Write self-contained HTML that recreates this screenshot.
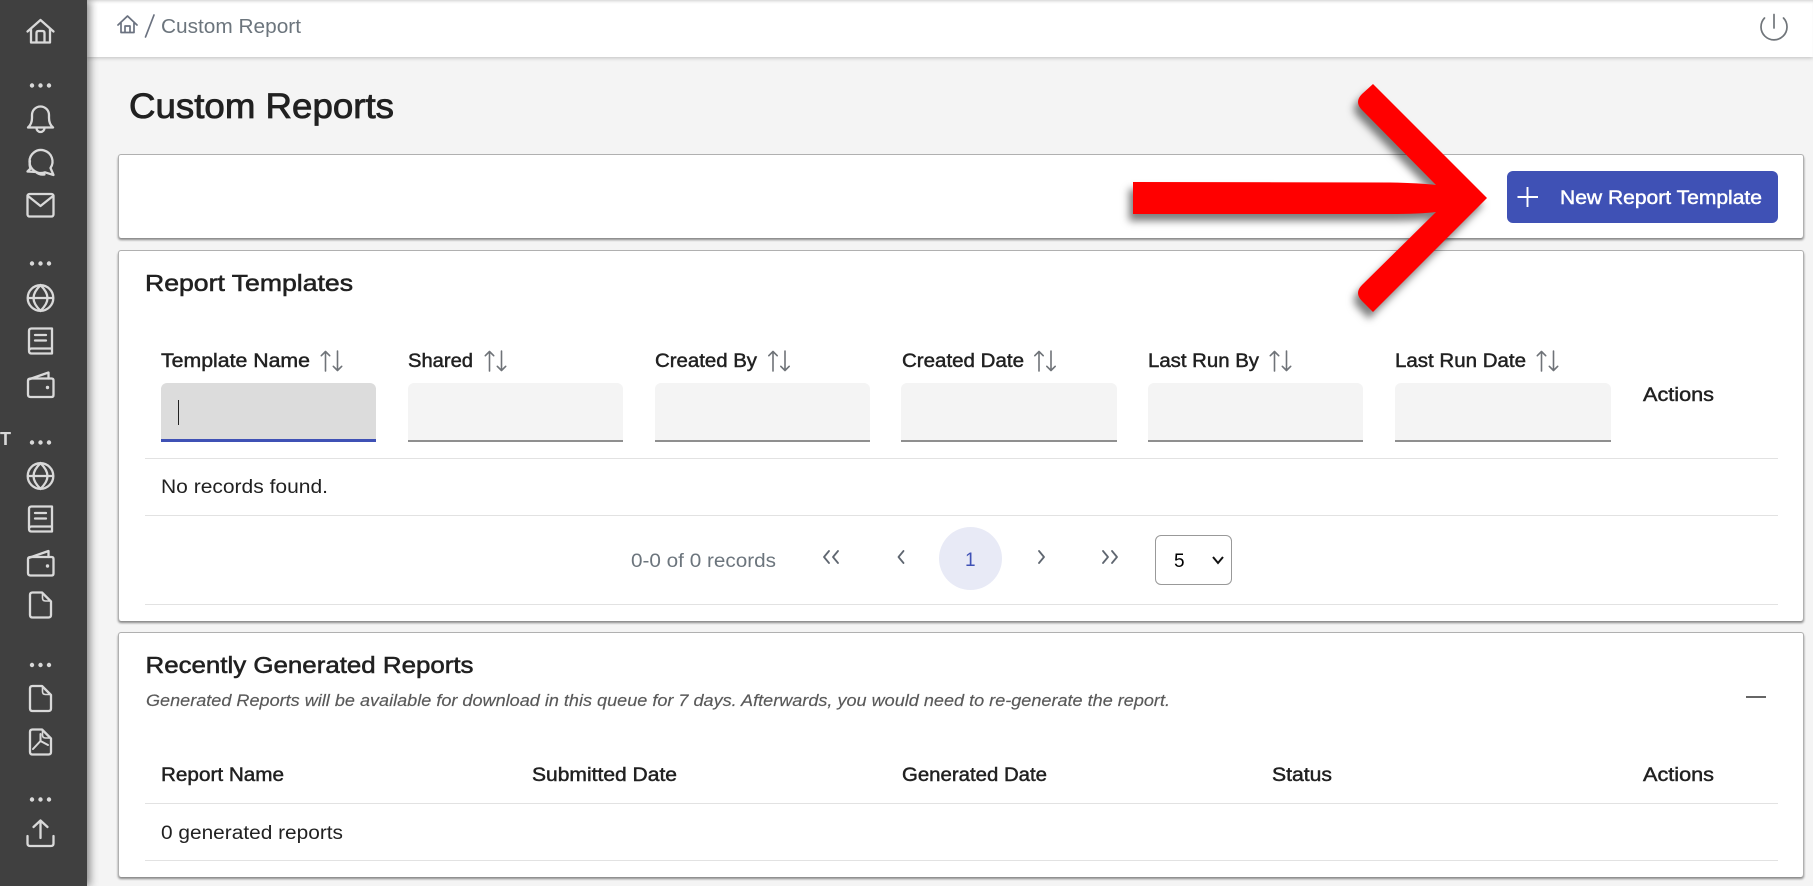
<!DOCTYPE html>
<html lang="en">
<head>
<meta charset="utf-8">
<title>Custom Reports</title>
<style>
html,body{margin:0;padding:0;width:1813px;height:886px;overflow:hidden;background:#f4f4f4;font-family:"Liberation Sans",sans-serif}
.abs{position:absolute}
#side{left:0;top:0;width:87px;height:886px;background:#404040;box-shadow:3px 0 8px rgba(0,0,0,.45);z-index:3}
#side svg{display:block}
#head{left:87px;top:0;width:1726px;height:57px;background:#fff;box-shadow:0 1px 4px rgba(0,0,0,.22), inset 0 3px 3px -2px rgba(0,0,0,.2)}
.card{left:118px;width:1686px;background:#fff;border:1px solid #b0b0b0;border-bottom:none;border-radius:3px;box-sizing:border-box;box-shadow:0 2px 2px rgba(0,0,0,.45)}
.inp{top:383px;width:215px;height:59px;background:#f4f4f4;border-bottom:2px solid #8f8f8f;box-sizing:border-box;border-radius:6px 6px 0 0}
.ln{left:145px;width:1633px;height:1px;background:#e2e2e2}
#btn{left:1507px;top:171px;width:271px;height:52px;background:#3f51b5;border-radius:6px}
#circ{left:939px;top:527px;width:63px;height:63px;border-radius:50%;background:#e8eaf6}
#sel{left:1155px;top:535px;width:77px;height:50px;border:1px solid #999;border-radius:6px;box-sizing:border-box;background:#fff}
svg.abs{left:0;top:0}
.m{stroke-width:.45px;stroke:#212121}
</style>
</head>
<body>
<div class="abs" id="head"></div>
<div class="abs card" style="top:154px;height:84px"></div>
<div class="abs card" style="top:250px;height:371px"></div>
<div class="abs card" style="top:632px;height:245px"></div>
<div class="abs" id="btn"></div>
<div class="abs inp" style="left:161px;background:#dcdcdc;border-bottom:3px solid #3f51b5"></div>
<div class="abs inp" style="left:408px"></div>
<div class="abs inp" style="left:655px"></div>
<div class="abs inp" style="left:901px;width:216px"></div>
<div class="abs inp" style="left:1148px"></div>
<div class="abs inp" style="left:1395px;width:216px"></div>
<div class="abs" style="left:178px;top:400px;width:1px;height:25px;background:#222"></div>
<div class="abs ln" style="top:458px"></div>
<div class="abs ln" style="top:515px"></div>
<div class="abs ln" style="top:604px"></div>
<div class="abs ln" style="top:803px"></div>
<div class="abs ln" style="top:860px"></div>
<div class="abs" id="circ"></div>
<div class="abs" id="sel"></div>

<svg class="abs" width="1813" height="886" viewBox="0 0 1813 886" style="z-index:2" font-family="'Liberation Sans',sans-serif">
  <!-- breadcrumb -->
  <g fill="none" stroke="#6b7280" stroke-width="1.7" stroke-linejoin="round" stroke-linecap="round">
    <path d="M118 25 L127.500 16 L137 25 M121 23 V32.500 H134 V23 M125 32.500 V26 H130 V32.500"/>
    <path d="M145.500 37 L154 15" stroke-width="1.7"/>
  </g>
  <text x="161" y="33" font-size="20" fill="#6c757d" textLength="140" lengthAdjust="spacingAndGlyphs">Custom Report</text>
  <!-- power -->
  <g fill="none" stroke="#70757a" stroke-width="1.7" stroke-linecap="round">
    <path d="M1774 14.500 V28"/>
    <path d="M1764.500 18 A13 13 0 1 0 1783.500 18"/>
  </g>
  <!-- title -->
  <text class="m" x="129" y="118" font-size="35" fill="#212121" textLength="265" lengthAdjust="spacingAndGlyphs" style="stroke-width:.8px">Custom Reports</text>
  <text class="m" x="145" y="291" font-size="23.500" fill="#212121" textLength="208" lengthAdjust="spacingAndGlyphs" style="stroke-width:.55px">Report Templates</text>

  <!-- button -->
  <path d="M1527.500 187 V207 M1517.500 197 H1538" stroke="#fff" stroke-width="1.900" fill="none"/>
  <text x="1560" y="204" font-size="19" fill="#fff" stroke="#fff" stroke-width=".45" textLength="202" lengthAdjust="spacingAndGlyphs">New Report Template</text>

  <!-- table 1 headers -->
  <g font-size="19" fill="#212121">
    <text class="m" x="161" y="367" textLength="149" lengthAdjust="spacingAndGlyphs">Template Name</text>
    <text class="m" x="408" y="367" textLength="65" lengthAdjust="spacingAndGlyphs">Shared</text>
    <text class="m" x="655" y="367" textLength="102" lengthAdjust="spacingAndGlyphs">Created By</text>
    <text class="m" x="902" y="367" textLength="122" lengthAdjust="spacingAndGlyphs">Created Date</text>
    <text class="m" x="1148" y="367" textLength="111" lengthAdjust="spacingAndGlyphs">Last Run By</text>
    <text class="m" x="1395" y="367" textLength="131" lengthAdjust="spacingAndGlyphs">Last Run Date</text>
    <text class="m" x="1643" y="401" textLength="71" lengthAdjust="spacingAndGlyphs">Actions</text>
    <text x="161" y="493" textLength="167" lengthAdjust="spacingAndGlyphs">No records found.</text>
    <text class="m" x="161" y="781" textLength="123" lengthAdjust="spacingAndGlyphs">Report Name</text>
    <text class="m" x="532" y="781" textLength="145" lengthAdjust="spacingAndGlyphs">Submitted Date</text>
    <text class="m" x="902" y="781" textLength="145" lengthAdjust="spacingAndGlyphs">Generated Date</text>
    <text class="m" x="1272" y="781" textLength="60" lengthAdjust="spacingAndGlyphs">Status</text>
    <text class="m" x="1643" y="781" textLength="71" lengthAdjust="spacingAndGlyphs">Actions</text>
    <text x="161" y="839" textLength="182" lengthAdjust="spacingAndGlyphs">0 generated reports</text>
  </g>

  <!-- sort icons -->
  <defs>
    <g id="sort" fill="none" stroke="#6f7378" stroke-width="1.600" stroke-linecap="round" stroke-linejoin="round">
      <path d="M6 21 V1.500 M1.800 5.700 L6 1.500 L10.200 5.700"/>
      <path d="M18 1 V20.500 M13.800 16.300 L18 20.500 L22.200 16.300"/>
    </g>
  </defs>
  <use href="#sort" x="319.500" y="350"/>
  <use href="#sort" x="483.500" y="350"/>
  <use href="#sort" x="767" y="350"/>
  <use href="#sort" x="1033" y="350"/>
  <use href="#sort" x="1268.500" y="350"/>
  <use href="#sort" x="1535.500" y="350"/>

  <!-- pagination -->
  <text x="631" y="567" font-size="19" fill="#6c757d" textLength="145" lengthAdjust="spacingAndGlyphs">0-0 of 0 records</text>
  <g fill="none" stroke="#5f6670" stroke-width="1.800" stroke-linejoin="round" stroke-linecap="round">
    <path d="M829 551 L824 557 L829 563 M838 551 L833 557 L838 563"/>
    <path d="M903.500 551 L898.500 557 L903.500 563"/>
    <path d="M1039 551 L1044 557 L1039 563"/>
    <path d="M1103 551 L1108 557 L1103 563 M1112 551 L1117 557 L1112 563"/>
  </g>
  <text x="965" y="566" font-size="19" fill="#3f51b5">1</text>
  <text x="1174" y="567" font-size="19" fill="#000">5</text>
  <path d="M1213 557 L1218 563 L1223 557" fill="none" stroke="#111" stroke-width="2"/>

  <!-- card 3 -->
  <text class="m" x="145.500" y="673" font-size="23.500" fill="#212121" textLength="328" lengthAdjust="spacingAndGlyphs" style="stroke-width:.55px">Recently Generated Reports</text>
  <text x="146" y="706" font-size="16.500" font-style="italic" fill="#595959" stroke="#595959" stroke-width=".15" textLength="1024" lengthAdjust="spacingAndGlyphs">Generated Reports will be available for download in this queue for 7 days. Afterwards, you would need to re-generate the report.</text>
  <rect x="1746" y="696" width="20" height="2" fill="#666"/>
</svg>

<div class="abs" id="side">
<svg width="87" height="886" viewBox="0 0 87 886" font-family="'Liberation Sans',sans-serif">
  <defs>
    <g id="globe" fill="none" stroke="#d9d9d9" stroke-width="2.300">
      <circle cx="14" cy="14" r="12.800"/>
      <path d="M1.500 14 H26.500"/>
      <path d="M14 1.200 Q21 8 21 14 Q21 20 14 26.800 Q7 20 7 14 Q7 8 14 1.200 Z"/>
    </g>
    <g id="book" fill="none" stroke="#d9d9d9" stroke-width="2.300" stroke-linejoin="round" stroke-linecap="round">
      <path d="M2 23 V4 Q2 1.500 4.500 1.500 H25 V26.500 H4.500 Q2 26.500 2 24 Q2 21.500 4.500 21.500 H25"/>
      <path d="M8 8 H19 M8 13.500 H19"/>
    </g>
    <g id="wallet" fill="none" stroke="#d9d9d9" stroke-width="2.300" stroke-linejoin="round" stroke-linecap="round">
      <path d="M1.500 10 V24 Q1.500 26.500 4 26.500 H25 Q27 26.500 27 24.500 V10 Q27 8 25 8 H4 Q1.500 8 1.500 10"/>
      <path d="M2 9 L22 2 V8"/>
      <circle cx="21" cy="17" r="1.700" fill="#d9d9d9" stroke="none"/>
    </g>
    <g id="file" fill="none" stroke="#d9d9d9" stroke-width="2.300" stroke-linejoin="round">
      <path d="M4.500 1.500 H14 L23 10.500 V24 Q23 26.500 20.500 26.500 H4.500 Q2 26.500 2 24 V4 Q2 1.500 4.500 1.500 Z"/>
      <path d="M14.500 2 V7 Q14.500 10 17.500 10 H22.500" stroke-width="1.600"/>
    </g>
    <g id="dots" fill="#d9d9d9">
      <circle cx="32" cy="0" r="2.200"/><circle cx="40.500" cy="0" r="2.200"/><circle cx="49" cy="0" r="2.200"/>
    </g>
  </defs>

  <!-- home -->
  <g fill="none" stroke="#d9d9d9" stroke-width="2.300" stroke-linejoin="round" stroke-linecap="round">
    <path d="M27.500 31.500 L40.500 20 L53.500 31.500 M31 28.500 V42.500 H50 V28.500 M36.500 42.500 V33 Q36.500 31 38.500 31 H42.500 Q44.500 31 44.500 33 V42.500"/>
  </g>
  <use href="#dots" y="85.500"/>
  <!-- bell -->
  <g fill="none" stroke="#d9d9d9" stroke-width="2.300" stroke-linejoin="round" stroke-linecap="round">
    <path d="M28 127.500 Q32 124 32 118 V115 A8.500 8.500 0 0 1 49 115 V118 Q49 124 53 127.500 Z"/>
    <path d="M36.500 128 A4 4 0 0 0 44.500 128"/>
  </g>
  <!-- chat -->
  <g fill="none" stroke="#d9d9d9" stroke-width="2.300" stroke-linejoin="round" stroke-linecap="round">
    <path d="M50.500 168 L53.500 175 L45 172.300 A11.500 11.500 0 1 1 50.500 168 Z"/>
    <path d="M30 161 Q29 165 30.500 168.500 L27.500 171.500 L36 172 Q39 175 44.500 174.500"/>
  </g>
  <!-- mail -->
  <g fill="none" stroke="#d9d9d9" stroke-width="2.300" stroke-linejoin="round" stroke-linecap="round">
    <rect x="27.500" y="194" width="26" height="22.500" rx="2"/>
    <path d="M28 196 L40.500 206 L53 196"/>
  </g>
  <use href="#dots" y="263.500"/>
  <use href="#globe" x="26.500" y="284"/>
  <use href="#book" x="27" y="327"/>
  <use href="#wallet" x="26.500" y="370.500"/>
  <text x="0" y="445" font-size="18" font-weight="700" fill="#d9d9d9">T</text>
  <use href="#dots" y="442.500"/>
  <use href="#globe" x="26.500" y="462"/>
  <use href="#book" x="27" y="505"/>
  <use href="#wallet" x="26.500" y="549"/>
  <use href="#file" x="28" y="591"/>
  <use href="#dots" y="665"/>
  <use href="#file" x="28" y="684.500"/>
  <use href="#file" x="28" y="728"/>
  <path d="M40.500 734 L40.500 741 L33 749 M40.500 741 L48 745" fill="none" stroke="#d9d9d9" stroke-width="2" stroke-linejoin="round" stroke-linecap="round"/>
  <use href="#dots" y="799.500"/>
  <!-- upload -->
  <g fill="none" stroke="#d9d9d9" stroke-width="2.300" stroke-linejoin="round" stroke-linecap="round">
    <path d="M40.500 838 V820.500 M33.500 827 L40.500 820.500 L47.500 827"/>
    <path d="M27.500 836 V843.500 Q27.500 846 30 846 H51 Q53.500 846 53.500 843.500 V836"/>
  </g>
</svg>
</div>

<!-- red arrow -->
<svg class="abs" width="1813" height="886" viewBox="0 0 1813 886" style="z-index:4;filter:drop-shadow(-4px 7px 4px rgba(0,0,0,.5))">
  <path fill="#ff0000" d="M1133 182 L1390 182.500 Q1420 183 1436 185 L1362 110 Q1354 102 1362 94 L1373 84 L1487 198 L1373 312 L1362 301 Q1354 293 1362 285 L1436 212 Q1420 214 1390 214 L1133 214 Z"/>
</svg>
</body>
</html>
